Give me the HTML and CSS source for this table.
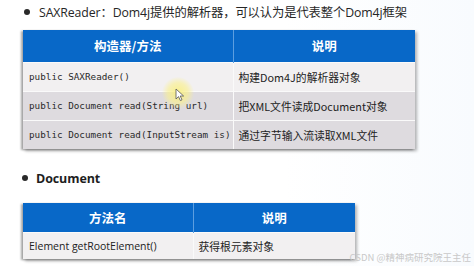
FILE: index.html
```html
<!DOCTYPE html>
<html>
<head>
<meta charset="utf-8">
<link rel="stylesheet" href="styles.css">
</head>
<body>
<div class="page">
  <div class="bullet-line">
    <span class="dot"></span>
    <span class="title">SAXReader：Dom4j提供的解析器，可以认为是代表整个Dom4j框架</span>
  </div>
  <table class="tbl tbl1">
    <thead>
      <tr><th class="c1">构造器/方法</th><th class="c2">说明</th></tr>
    </thead>
    <tbody>
      <tr class="r1"><td class="code">public SAXReader()</td><td>构建Dom4J的解析器对象</td></tr>
      <tr class="r2"><td class="code">public Document read(String url)</td><td>把XML文件读成Document对象</td></tr>
      <tr class="r2"><td class="code">public Document read(InputStream is)</td><td>通过字节输入流读取XML文件</td></tr>
    </tbody>
  </table>
  <div class="bullet-line second">
    <span class="dot"></span>
    <span class="title bold">Document</span>
  </div>
  <table class="tbl tbl2">
    <thead>
      <tr><th class="d1">方法名</th><th class="d2">说明</th></tr>
    </thead>
    <tbody>
      <tr class="r1"><td>Element getRootElement()</td><td>获得根元素对象</td></tr>
    </tbody>
  </table>
  <div class="cursor">
    <svg width="10" height="14" viewBox="0 0 10 14"><path d="M1 1 L1 11 L3.5 8.6 L5.4 12.6 L7 11.8 L5.2 8 L8.6 8 Z" fill="#fff" stroke="#555" stroke-width="0.8"/></svg>
  </div>
  <div class="watermark">CSDN @精神病研究院王主任</div>
</div>
</body>
</html>
```

FILE: styles.css
```css
* { box-sizing: border-box; }
html, body { margin: 0; padding: 0; background: #fff; }
body {
  width: 474px;
  height: 266px;
  overflow: hidden;
  font-family: "Open Sans", "Noto Sans CJK SC", sans-serif;
  color: #222;
}
.page {
  position: relative;
  width: 474px;
  height: 266px;
  padding: 3px 0 0 23px;
  background: linear-gradient(90deg, #fff 60%, #f8fbfe 100%);
}
.bullet-line {
  display: flex;
  align-items: center;
  height: 18px;
  gap: 9px;
}
.dot {
  width: 6px;
  height: 6px;
  border-radius: 50%;
  background: #2a2a2a;
  margin-left: 1px;
}
.title {
  font-size: 12.3px;
  color: #262626;
  letter-spacing: -0.1px;
}
.title.bold { font-weight: 700; font-size: 12.5px; color: #1e1e1e; }
.bullet-line.second {
  margin-top: 20px;
  margin-left: -2px;
  gap: 8px;
}
.tbl {
  border-collapse: collapse;
  margin-top: 9px;
  box-shadow: -2px 1px 2px rgba(0,0,0,0.35), 2px 2px 3px rgba(0,0,0,0.3);
  font-size: 10.8px;
  color: #222;
}
.tbl th {
  background: #0868c8;
  color: #fff;
  font-weight: 700;
  font-size: 12.5px;
  height: 32px;
  padding: 0;
  text-align: center;
  font-family: "Noto Sans CJK SC", sans-serif;
}
.tbl th + th { border-left: 1px solid #5c9ee0; }
.tbl td {
  padding: 0 0 0 6px;
  height: 29px;
  border-top: 1px solid #fafafa;
  font-family: "Noto Sans CJK SC", sans-serif;
  white-space: nowrap;
}
.tbl td + td { border-left: 1px solid #fafafa; padding-left: 5px; }
.tbl .r1 td { background: #f2f0f1; }
.tbl .r2 td { background: #dedbdf; }
.tbl td.code {
  font-family: "DejaVu Sans Mono", monospace;
  font-size: 9.3px;
  color: #2a2a2a;
}
.tbl1 .c1 { width: 210px; }
.tbl1 .c2 { width: 182px; }
.tbl2 { margin-top: 16px; }
.tbl2 th { height: 29px; }
.tbl2 td { height: 27px; }
.tbl2 .d1 { width: 170px; }
.tbl2 .d2 { width: 162px; }
.tbl2 td:first-child { font-family: "Open Sans", sans-serif; font-size: 10.5px; }
.cursor {
  position: absolute;
  left: 162px;
  top: 77px;
  width: 32px;
  height: 32px;
  border-radius: 50%;
  background: radial-gradient(circle, rgba(250,240,120,0.85) 0%, rgba(250,240,140,0.6) 45%, rgba(255,255,200,0) 72%);
  display: flex;
  align-items: center;
  justify-content: center;
  padding: 4px 0 0 4px;
}
.watermark {
  position: absolute;
  right: 3px;
  bottom: 2px;
  font-size: 9.5px;
  color: #c9c9c9;
  font-family: "Noto Sans CJK SC", sans-serif;
}
```
